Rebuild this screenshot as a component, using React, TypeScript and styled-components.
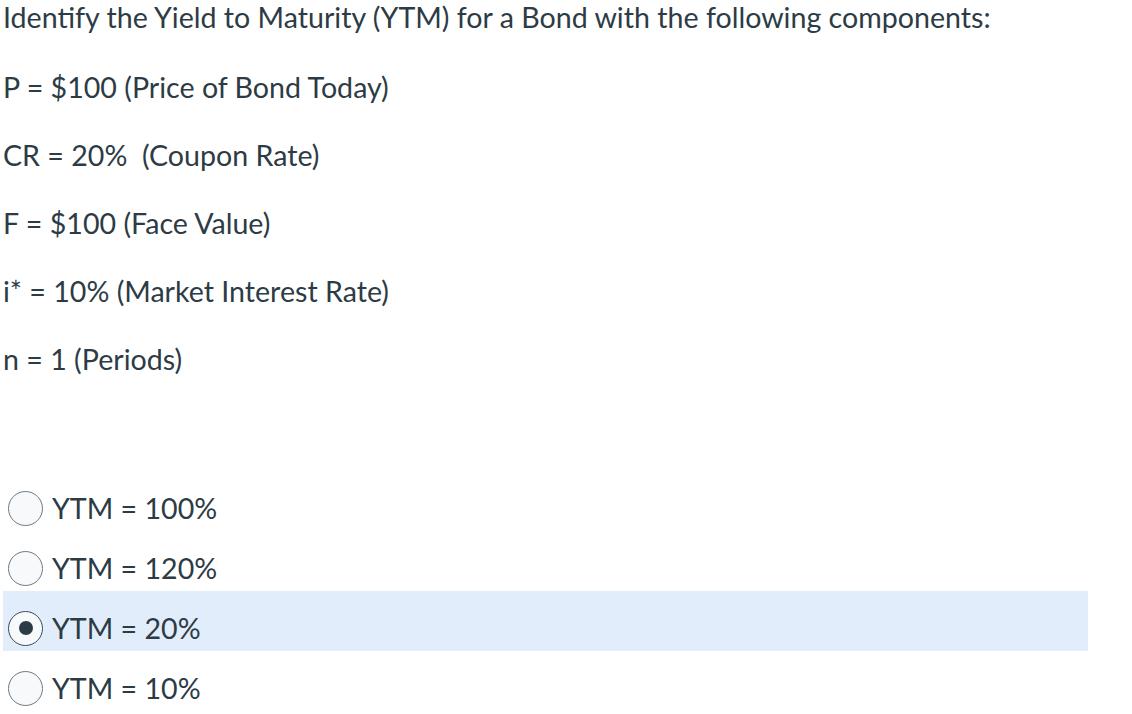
import styled, { createGlobalStyle } from "styled-components"

const GlobalStyle = createGlobalStyle`
    body {
        margin: 0;
        background: #ffffff;
        font-family: Lato, "Open Sans", sans-serif;
        color: #2d3b45;
    }
`

const Page = styled.div`
    width: 1132px;
    height: 714px;
    overflow: hidden;
`
const Question = styled.div`
    padding-left: 3px;
    & > p {
        margin: 0 0 34px;
        font-size: 28.6px;
        line-height: 34px;
    }
    & > p:first-child {
        margin-bottom: 36px;
    }
`
const Answers = styled.div`
    margin-top: 95px;
    width: 1085px;
    display: flex;
    flex-direction: column;
    padding-left: 3px;
`
const Option = styled.label<{ $selected?: boolean }>`
    box-sizing: border-box;
    display: flex;
    align-items: center;
    gap: 9px;
    height: 60px;
    padding: 14px 0 0 5px;
    font-size: 28.6px;
    background: ${p => (p.$selected ? "#e1edfa" : "transparent")};
`
const Radio = styled.span<{ $checked?: boolean }>`
    box-sizing: border-box;
    flex: none;
    width: 35px;
    height: 35px;
    border-radius: 50%;
    border: 1.5px solid ${p => (p.$checked ? "#394b58" : "#6e7a84")};
    background: #f7f9fb;
    display: flex;
    align-items: center;
    justify-content: center;
    &::after {
        content: "";
        width: 14px;
        height: 14px;
        border-radius: 50%;
        background: #2d3b45;
        display: ${p => (p.$checked ? "block" : "none")};
    }
`

const options = ["YTM = 100%", "YTM = 120%", "YTM = 20%", "YTM = 10%"]

export default function App() {
    return (
        <Page>
            <GlobalStyle />
            <Question>
                <p>Identify the Yield to Maturity (YTM) for a Bond with the following components:</p>
                <p>P = $100 (Price of Bond Today)</p>
                <p>CR = 20%&nbsp; (Coupon Rate)</p>
                <p>F = $100 (Face Value)</p>
                <p>i* = 10% (Market Interest Rate)</p>
                <p>n = 1 (Periods)</p>
            </Question>
            <Answers>
                {options.map((o, i) => (
                    <Option key={o} $selected={i === 2}>
                        <Radio $checked={i === 2} />
                        {o}
                    </Option>
                ))}
            </Answers>
        </Page>
    )
}
